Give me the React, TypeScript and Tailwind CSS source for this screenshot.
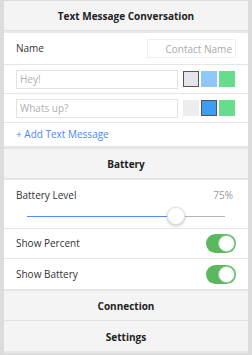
import { useState } from "react";

const font = { fontFamily: '"Open Sans", "Liberation Sans", sans-serif' };

function Header({ title, last }: { title: string; last?: boolean }) {
  return (
    <div
      className={`flex h-[30px] items-center justify-center bg-[#f4f4f4] pt-[2px] text-[10px] font-bold text-[#222] ${
        last ? "" : "border-b border-[#e1e1e1]"
      }`}
    >
      {title}
    </div>
  );
}

function Swatch({ color, selected }: { color: string; selected?: boolean }) {
  return (
    <div
      className={`h-[16px] w-[16px] ${selected ? "border-[1.5px] border-[#555]" : ""}`}
      style={{ backgroundColor: color }}
    />
  );
}

function MessageRow({ placeholder, colors, selected }: { placeholder: string; colors: string[]; selected: number }) {
  return (
    <div className="flex h-[29px] items-center gap-[5px] border-b border-[#e6e6e6] pl-[12px] pr-[13px]">
      <input
        placeholder={placeholder}
        className="h-[19px] w-[164px] border border-[#e3e3e3] px-[3px] text-[10px] text-[#333] outline-none placeholder:text-[#b0b0b0]"
        style={font}
      />
      <div className="flex gap-[2px]">
        {colors.map((c, i) => (
          <Swatch key={i} color={c} selected={i === selected} />
        ))}
      </div>
    </div>
  );
}

function Toggle() {
  return (
    <div className="flex h-[19px] w-[30px] items-center justify-end rounded-full bg-[#5cb85f] p-[1px]">
      <div className="h-[17px] w-[17px] rounded-full border border-[#8fd092] bg-white" />
    </div>
  );
}

export default function App() {
  const [level] = useState(75);

  return (
    <div className="min-h-[355px] w-[252px] bg-[#dcdcdc] px-[4px] pt-[1px]" style={font}>
      <div className="flex flex-col">
        {/* Text messages */}
        <Header title="Text Message Conversation" />
        <div className="h-[2px] bg-[#e9e9e9]" />
        <div className="bg-white">
          <div className="flex h-[32px] items-center justify-between border-b border-[#e6e6e6] pl-[12px] pr-[12px]">
            <span className="text-[10px] text-[#333]">Name</span>
            <input
              placeholder="Contact Name"
              className="h-[19px] w-[89px] border border-[#f0f0f0] px-[3px] text-right text-[10px] outline-none placeholder:text-[#aaa]"
              style={font}
            />
          </div>
          <MessageRow placeholder="Hey!" colors={["#e5e5ea", "#8ec8fb", "#66dc8d"]} selected={0} />
          <MessageRow placeholder="Whats up?" colors={["#ededed", "#3c9cf2", "#66dc8d"]} selected={1} />
          <div className="flex h-[23px] items-center pl-[12px] text-[10px] text-[#4a8af4]">+ Add Text Message</div>
        </div>
        <div className="h-[3px] bg-[#e6e6e6]" />

        {/* Battery */}
        <Header title="Battery" />
        <div className="h-[1px] bg-[#e9e9e9]" />
        <div className="bg-white">
          <div className="h-[49px] border-b border-[#e6e6e6] pl-[12px] pr-[15px] pt-[8px]">
            <div className="flex justify-between text-[10px]">
              <span className="text-[#333]">Battery Level</span>
              <span className="text-[#9a9a9a]">{level}%</span>
            </div>
            <div className="relative ml-[11px] mr-[8px] mt-[13px] h-[1px] bg-[#b5b5b5]">
              <div className="absolute left-0 top-0 h-[1px] bg-[#4f8ef5]" style={{ width: `${level}%` }} />
              <div
                className="absolute top-[-9px] h-[18px] w-[18px] -translate-x-1/2 rounded-full border border-[#e2e2e2] bg-white shadow-[0_1px_3px_rgba(0,0,0,0.25)]"
                style={{ left: `${level}%` }}
              />
            </div>
          </div>
          <div className="flex h-[30px] items-center justify-between border-b border-[#e6e6e6] pl-[12px] pr-[12px]">
            <span className="text-[10px] text-[#333]">Show Percent</span>
            <Toggle />
          </div>
          <div className="flex h-[30px] items-center justify-between pl-[12px] pr-[12px]">
            <span className="text-[10px] text-[#333]">Show Battery</span>
            <Toggle />
          </div>
        </div>
        <div className="h-[2px] bg-[#e6e6e6]" />

        {/* Collapsed sections */}
        <Header title="Connection" />
        <Header title="Settings" last />
        <div className="h-[2px] bg-[#e6e6e6]" />
      </div>
    </div>
  );
}
